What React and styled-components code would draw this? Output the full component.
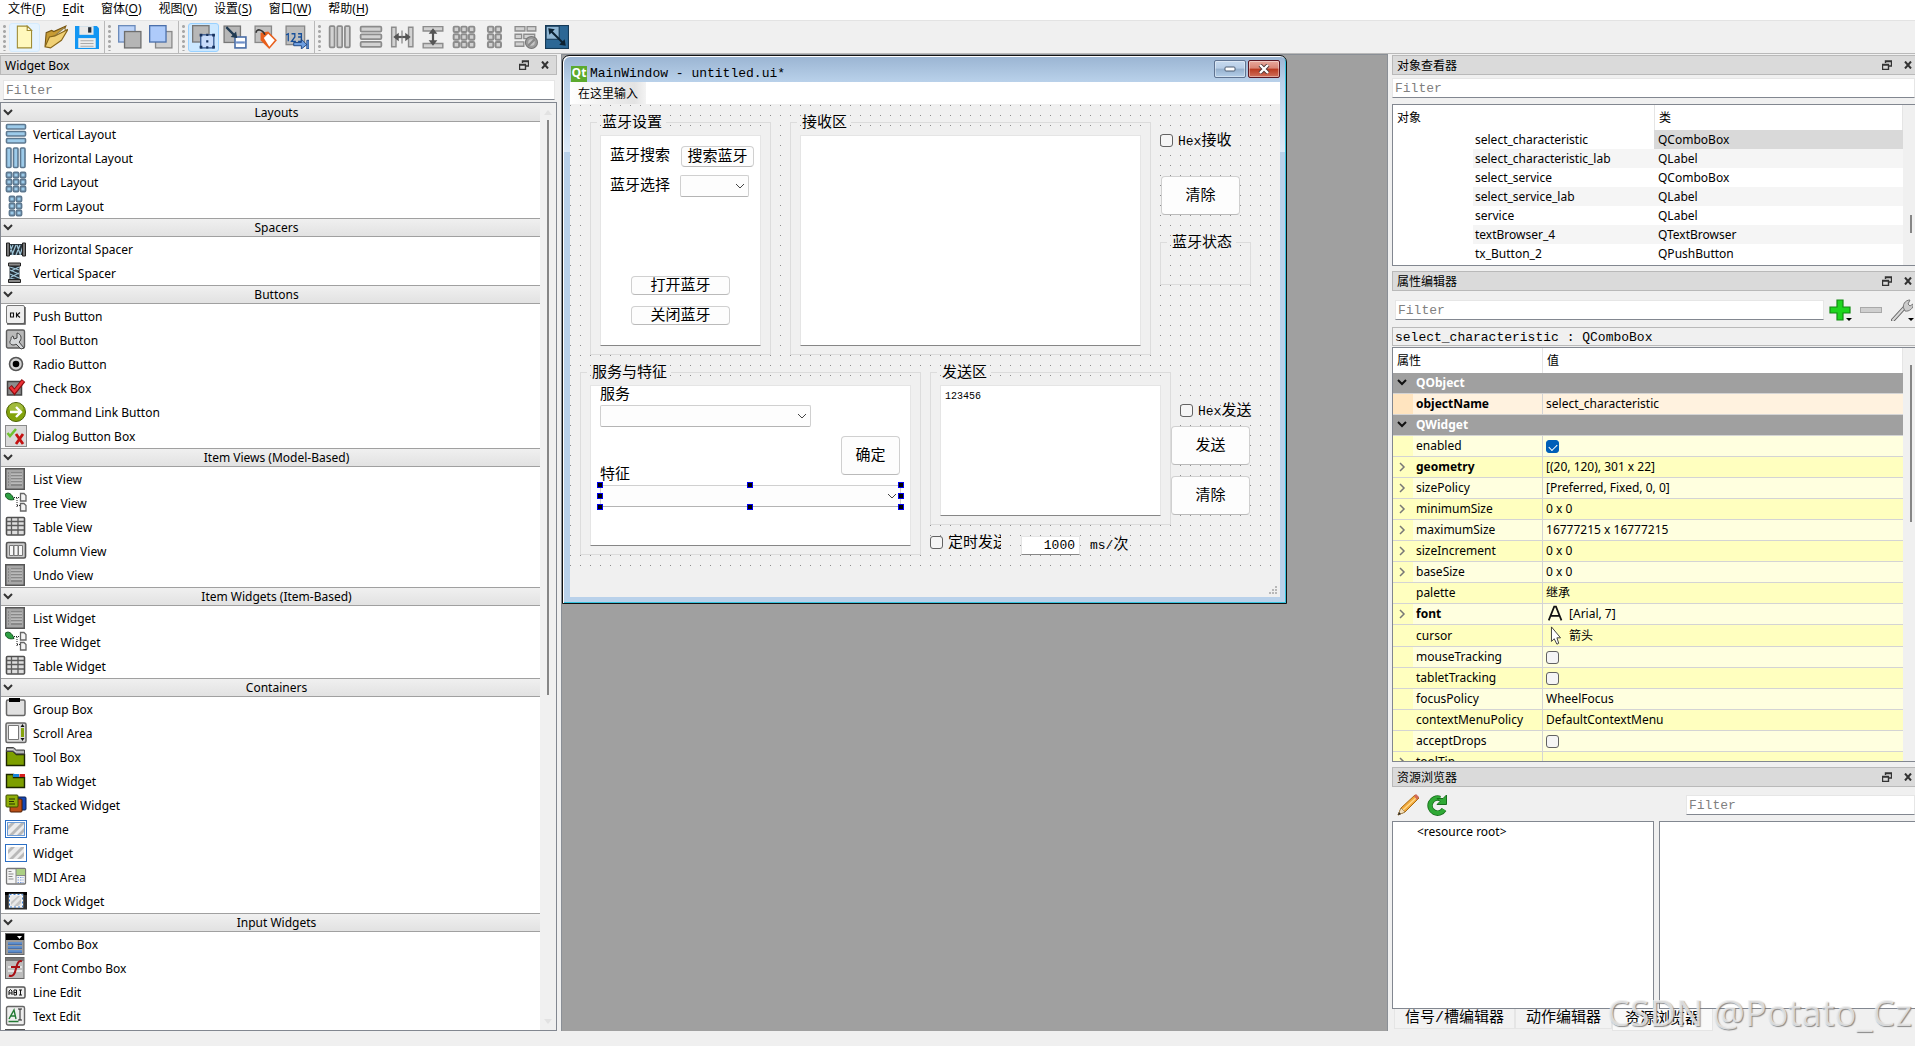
import { useState } from "react"
import styled, { createGlobalStyle, css } from "styled-components"

const theme = {
	ui: `"Noto Sans", "Noto Sans CJK SC", sans-serif`,
	mono: `"Liberation Mono", "Noto Sans CJK SC", monospace`,
	face: "#f0f0f0",
	line: "#828790",
	soft: "#b9b9b9",
}

const menus = [
	["文件", "F"],
	["", "E", "dit"],
	["窗体", "O"],
	["视图", "V"],
	["设置", "S"],
	["窗口", "W"],
	["帮助", "H"],
]

const toolGroups = [
	[
		{ name: "new", hot: true },
		{ name: "open" },
		{ name: "save" },
	],
	[{ name: "lower" }, { name: "raise" }],
	[
		{ name: "editWidgets", active: true },
		{ name: "signals" },
		{ name: "buddies" },
		{ name: "tabOrder" },
	],
	[
		{ name: "hLayoutGrey" },
		{ name: "vLayoutGrey" },
		{ name: "hSplit" },
		{ name: "vSplit" },
		{ name: "gridGrey" },
		{ name: "formGrey" },
		{ name: "breakLayout" },
		{ name: "adjust" },
	],
]

const widgetGroups = [
	{
		title: "Layouts",
		items: [
			["Vertical Layout", "vLayout"],
			["Horizontal Layout", "hLayout"],
			["Grid Layout", "grid"],
			["Form Layout", "form"],
		],
	},
	{
		title: "Spacers",
		items: [
			["Horizontal Spacer", "hSpacer"],
			["Vertical Spacer", "vSpacer"],
		],
	},
	{
		title: "Buttons",
		items: [
			["Push Button", "pushButton"],
			["Tool Button", "toolButton"],
			["Radio Button", "radio"],
			["Check Box", "check"],
			["Command Link Button", "commandLink"],
			["Dialog Button Box", "dialogBox"],
		],
	},
	{
		title: "Item Views (Model-Based)",
		items: [
			["List View", "list"],
			["Tree View", "tree"],
			["Table View", "table"],
			["Column View", "column"],
			["Undo View", "list"],
		],
	},
	{
		title: "Item Widgets (Item-Based)",
		items: [
			["List Widget", "list"],
			["Tree Widget", "tree"],
			["Table Widget", "table"],
		],
	},
	{
		title: "Containers",
		items: [
			["Group Box", "groupBox"],
			["Scroll Area", "scrollArea"],
			["Tool Box", "toolBox"],
			["Tab Widget", "tabWidget"],
			["Stacked Widget", "stacked"],
			["Frame", "frame"],
			["Widget", "widget"],
			["MDI Area", "mdi"],
			["Dock Widget", "dock"],
		],
	},
	{
		title: "Input Widgets",
		items: [
			["Combo Box", "combo"],
			["Font Combo Box", "fontCombo"],
			["Line Edit", "lineEdit"],
			["Text Edit", "textEdit"],
			["", "list"],
		],
	},
]

const objects = [
	["select_characteristic", "QComboBox"],
	["select_characteristic_lab", "QLabel"],
	["select_service", "QComboBox"],
	["select_service_lab", "QLabel"],
	["service", "QLabel"],
	["textBrowser_4", "QTextBrowser"],
	["tx_Button_2", "QPushButton"],
]

const properties = [
	{ group: "QObject" },
	{ name: "objectName", value: "select_characteristic", bold: true, tone: "peach" },
	{ group: "QWidget" },
	{ name: "enabled", check: true, checked: true, tone: "light" },
	{ name: "geometry", value: "[(20, 120), 301 x 22]", bold: true, expand: true, tone: "dark" },
	{ name: "sizePolicy", value: "[Preferred, Fixed, 0, 0]", expand: true, tone: "light" },
	{ name: "minimumSize", value: "0 x 0", expand: true, tone: "dark" },
	{ name: "maximumSize", value: "16777215 x 16777215", expand: true, tone: "light" },
	{ name: "sizeIncrement", value: "0 x 0", expand: true, tone: "dark" },
	{ name: "baseSize", value: "0 x 0", expand: true, tone: "light" },
	{ name: "palette", value: "继承", tone: "dark" },
	{ name: "font", value: "[Arial, 7]", bold: true, expand: true, icon: "letter", tone: "light" },
	{ name: "cursor", value: "箭头", icon: "cursor", tone: "dark", tall: true },
	{ name: "mouseTracking", check: true, tone: "light" },
	{ name: "tabletTracking", check: true, tone: "dark" },
	{ name: "focusPolicy", value: "WheelFocus", tone: "light" },
	{ name: "contextMenuPolicy", value: "DefaultContextMenu", tone: "dark" },
	{ name: "acceptDrops", check: true, tone: "light" },
	{ name: "toolTip", value: "", expand: true, tone: "dark" },
]

const tones = {
	peach: ["#ffe4bf", "#fff2df"],
	light: ["#ffffbf", "#ffffdf"],
	dark: ["#ffffbf", "#ffffbf"],
}

const handles = [
	[0, 0], [150, 0], [301, 0],
	[0, 11], [301, 11],
	[0, 22], [150, 22], [301, 22],
]

/* ---------- icons ---------- */

const blue = { fill: "#9dcbea", stroke: "#5d7890" }
const grey = { fill: "#d2d2d2", stroke: "#8c8c8c" }

const rows = (c) => [2, 9, 16].map((y) => (
	<rect key={y} x="1.5" y={y - 0.5} width="19" height="4.5" rx="1" strokeWidth="1.6" {...c} />
))
const cols = (c) => [2, 9, 16].map((x) => (
	<rect key={x} x={x - 0.5} y="1" width="4.5" height="19.5" rx="1" strokeWidth="1.6" {...c} />
))
const cells = (c, xs) => xs.flatMap((x) => [1.5, 8.5, 15.5].map((y) => (
	<rect key={`${x}-${y}`} x={x} y={y} width="5" height="5" rx="1" strokeWidth="1.8" {...c} />
)))
const stripes = (
	<>
		<rect x="0.5" y="2.5" width="21" height="17" fill="#fff" stroke="#2c6fc4" />
		<path d="M3 5h16v12H3z" fill="#ececec" />
		<path d="M3 12v-4l3-3h4zM4 17 16 5h3v1L8 17zM12 17l7-7v4l-3 3z" fill="#b9b9b9" />
	</>
)
const sheet = (x, y, s, c) => <rect x={x} y={y} width={s} height={s} strokeWidth="1.2" {...c} />

const drawings = {
	vLayout: rows(blue),
	hLayout: cols(blue),
	grid: cells(blue, [1.5, 8.5, 15.5]),
	form: cells(blue, [4.5, 11.5]),
	vLayoutGrey: rows(grey),
	hLayoutGrey: cols(grey),
	gridGrey: cells(grey, [1.5, 8.5, 15.5]),
	formGrey: cells(grey, [4.5, 11.5]),
	hSpacer: (
		<>
			<path d="M4 6h14v11H4z" fill="#27323a" />
			<path d="M4 16 8 7M7 17l4-10M11 17l4-10M15 17l3-9M5 7l3 10M12 7l3 9" stroke="#9fc5d8" strokeWidth="1.2" fill="none" />
			<path d="M1.5 5h3v13h-3zM17.5 5h3v13h-3z" fill="#777" stroke="#222" />
		</>
	),
	vSpacer: (
		<>
			<path d="M4.5 3h10v16h-10z" fill="#27323a" />
			<path d="M5 5l9 3M5 8l9 4M5 12l9 4M5 16l7 2M14 5 6 9M14 11l-8 4" stroke="#9fc5d8" strokeWidth="1.2" fill="none" />
			<path d="M3.5 1h12v3h-12zM3.500 17.500h12v3h-12z" fill="#888" stroke="#222" />
		</>
	),
	pushButton: (
		<>
			<rect x="1.5" y="0.5" width="18" height="18" rx="1.5" fill="#eee" stroke="#777" />
			<path d="M2 19h18V2" fill="none" stroke="#555" strokeWidth="1.5" />
			<path d="M5.500 8h3v4h-3zM11.500 7.500v5M15 7.500l-3 2.500 3 2.500" fill="none" stroke="#111" strokeWidth="1.1" />
		</>
	),
	toolButton: (
		<>
			<rect x="1.5" y="1" width="18" height="18" rx="1.5" fill="#b9b9b9" stroke="#5c5c5c" strokeWidth="1.4" />
			<path d="M5 12c-1 4 4 5 6 3l5 5 3-1-5-6c3-2 3-8-2-9l0 5-3 1-1-3c-3 1-1 3-3 5z" fill="#d4d6d8" stroke="#444" />
		</>
	),
	radio: (
		<>
			<circle cx="11" cy="11" r="6.5" fill="#d5d5d5" stroke="#555" strokeWidth="1.6" />
			<circle cx="11" cy="11" r="3.3" fill="#000" />
		</>
	),
	check: (
		<>
			<rect x="2.5" y="4.500" width="14" height="13.500" fill="#8c8c8c" stroke="#444" strokeWidth="1.5" />
			<path d="M5 9.500 9.500 15 18.500 3.500" fill="none" stroke="#8e0d10" strokeWidth="4.500" />
			<path d="M5.500 10 9.500 14.500 18 4" fill="none" stroke="#ec3237" strokeWidth="2.500" />
		</>
	),
	commandLink: (
		<>
			<circle cx="11" cy="11" r="9.500" fill="#83a30c" stroke="#4d6206" />
			<ellipse cx="11" cy="7" rx="7" ry="5" fill="#b5cb5f" opacity=".6" />
			<path d="M5 11h10M11 6l5 5-5 5" fill="none" stroke="#fff" strokeWidth="2.4" />
		</>
	),
	dialogBox: (
		<>
			<rect x="0.5" y="0.5" width="21" height="21" fill="#dadada" stroke="#8b8b8b" />
			<path d="M2.500 8 5 11l6-7" fill="none" stroke="#6fc22e" strokeWidth="2.500" />
			<path d="M11 9l7 10M18 9l-7 10" stroke="#c41212" strokeWidth="2.800" />
		</>
	),
	list: (
		<>
			<rect x="0.75" y="0.75" width="18.500" height="20.500" fill="#a6a6a6" stroke="#565656" strokeWidth="1.500" />
			<path d="M6 5h11M6 8h11M6 11h11M6 14h11M6 17h11M3 5h1M3 8h1M3 11h1M3 14h1M3 17h1" stroke="#6b6b6b" />
			<path d="M6 6h11M6 9h11M6 12h11M6 15h11" stroke="#cdcdcd" />
		</>
	),
	tree: (
		<>
			<path d="M0 2.500c3-3 7-1 9 5-4 1-8 0-9-5z" fill="#2ea043" stroke="#12501e" />
			<path d="M9 5.500h6M12 6v10M12 13.500h3" fill="none" stroke="#222" strokeDasharray="1 1" />
			<path d="M15.500 1.500h3.500l2 2v5.500h-5.500zM15.500 11.500h3.500l2 2v5.500h-5.500z" fill="#f4f4f4" stroke="#666" strokeWidth="1.300" />
		</>
	),
	table: (
		<>
			<rect x="1.5" y="1.5" width="18" height="17.500" rx="1" fill="#dedede" stroke="#505050" strokeWidth="1.600" />
			<path d="M2 5.500h17M2 9.500h17M2 14h17M6.500 2v17M13 2v17" stroke="#5c5c5c" strokeWidth="1.300" />
		</>
	),
	column: (
		<>
			<rect x="1.5" y="2.500" width="19" height="15.500" rx="1.5" fill="#ccc" stroke="#555" strokeWidth="1.600" />
			<path d="M4.500 5.500h4v10h-4zM9 5.500h4v10H9zM13.500 5.500h4v10h-4z" fill="#f8f8f8" stroke="#777" />
		</>
	),
	groupBox: (
		<>
			<rect x="1.5" y="2" width="18.500" height="15.500" rx="1.5" fill="#e0e0e0" stroke="#666" strokeWidth="1.500" />
			<path d="M4 0h11v4H4z" fill="#000" />
		</>
	),
	scrollArea: (
		<>
			<rect x="1" y="1" width="20" height="19.500" rx="1.5" fill="#ddd" stroke="#666" strokeWidth="1.500" />
			<path d="M3.500 3.500h10v14h-10z" fill="#fff" stroke="#777" />
			<path d="M16 6h3v9h-3z" fill="#86a40c" />
			<path d="M15.500 5h4l-2-3zM15.500 16h4l-2 3z" fill="#111" />
		</>
	),
	toolBox: (
		<>
			<path d="M1.500 4.500h6l4 4h8v11h-18z" fill="#7d9f00" stroke="#1c2600" strokeWidth="1.400" />
			<path d="M1.500 1.500h7l3 2.500h8v4h-8L8 5.500H1.500z" fill="#909294" stroke="#444" />
			<path d="M2 3.500h6l3 2.500h8" fill="none" stroke="#ddd" />
		</>
	),
	tabWidget: (
		<>
			<path d="M1.500 4.500h7v3h11v10h-18z" fill="#7d9f00" stroke="#1c2600" strokeWidth="1.400" />
			<path d="M8 4h6v3H8z" fill="#1584d8" />
			<path d="M14.500 4H20v3h-5.500z" fill="#d61f1f" />
		</>
	),
	stacked: (
		<>
			<rect x="9" y="3" width="12" height="13" rx="1" fill="#1547b5" stroke="#0b1f50" />
			<rect x="5" y="5" width="12" height="13" rx="1" fill="#bb4f16" stroke="#4c1c03" />
			<rect x="1" y="1" width="12" height="12" rx="1" fill="#8fae08" stroke="#3d4c00" />
			<path d="M4 5h6M4 7.500h5M4 10h6" stroke="#263000" />
		</>
	),
	frame: (
		<>
			{stripes}
			<rect x="2.5" y="4.500" width="17" height="13" fill="none" stroke="#6f9dd5" />
		</>
	),
	widget: stripes,
	mdi: (
		<>
			<rect x="1.5" y="2.500" width="19" height="15.500" rx="1" fill="#f4f4f4" stroke="#777" strokeWidth="1.300" />
			<path d="M11 3h9v6h-9z" fill="#abcf83" />
			<path d="M11 3v15M11 9.500h9M3.500 5.500h3M3.500 8h5M3.500 10.500h4M3.500 13h5" stroke="#888" />
			<path d="M12.500 11.500h6M12.500 14h6M12.500 16.500h6" stroke="#7d9fe0" strokeDasharray="1.5 1" />
		</>
	),
	dock: (
		<>
			<rect y="2" width="22" height="17.500" fill="#2e2e2e" />
			<path d="M0 2h22v3H0z" fill="#000" />
			<rect x="4.500" y="4.500" width="13" height="12.500" fill="#e8e8e8" stroke="#fff" strokeWidth="1.400" />
			<rect x="4.500" y="4.500" width="13" height="12.500" fill="none" stroke="#3d7fd0" strokeDasharray="2 2" />
			<path d="M6 12 13 6h2L6 15zM9 16l7-7v4l-3 3z" fill="#c4c4c4" />
		</>
	),
	combo: (
		<>
			<rect x="0.5" y="0.5" width="18.500" height="21" fill="#9b9b9b" stroke="#666" />
			<path d="M1 1h18v6H1z" fill="#000" />
			<path d="M12 3h5l-2.500 3z" fill="#fff" />
			<path d="M3 10.500h14M3 14.500h14M3 18.500h14" stroke="#2f62aa" strokeWidth="2.500" />
			<path d="M3 10h14M3 14h14M3 18h14" stroke="#83b4ec" />
		</>
	),
	fontCombo: (
		<>
			<rect x="0.5" y="0.5" width="18.500" height="21" fill="#bdbdbd" stroke="#666" />
			<path d="M1 1h18v3H1z" fill="#777" />
			<path d="M3 10h14M3 14h14" stroke="#e4e4e4" strokeWidth="2" />
			<path d="M17 4.500c-3-2-5 2-6 7s-3 9-7 7M6 10h9" fill="none" stroke="#a80f14" strokeWidth="2" />
		</>
	),
	lineEdit: (
		<>
			<rect x="1.5" y="6" width="18.500" height="11" rx="1.5" fill="#eee" stroke="#555" strokeWidth="1.500" />
			<path d="M4 14v-4l1.500-1.500L7 10v4M4 12h3M9 9v5h2.500V9zM9 11.500h2.500M14 9h3M15.500 9v5M14 14h3" fill="none" stroke="#111" />
		</>
	),
	textEdit: (
		<>
			<rect x="1.5" y="1.5" width="18" height="18.500" rx="1.5" fill="#eee" stroke="#666" strokeWidth="1.400" />
			<path d="M4 14 9 5l2 9M6 11h4M3.500 16.500h10" fill="none" stroke="#247a34" strokeWidth="1.400" />
			<path d="M13 4h4M15 4v11M13 15h4" fill="none" stroke="#222" />
		</>
	),
	new: (
		<>
			<path d="M4 1h9l4 4v16H4z" fill="#fff8bd" stroke="#a08c35" />
			<path d="M13 1v4h4z" fill="#fffef0" stroke="#a08c35" />
		</>
	),
	open: (
		<>
			<path d="M1 19 2 7l5-2 2 1 11-5-6 13z" fill="#c79b33" stroke="#775513" />
			<path d="M5 14 18 3l2 1-5 8z" fill="#f3efe4" stroke="#97844f" />
			<path d="m1 20 4-9 5-1 12-6-6 10-10 7z" fill="#f0d074" stroke="#876519" />
		</>
	),
	save: (
		<>
			<path d="M0 1h20l2 2v19H0z" fill="#1296f3" />
			<path d="M4 1h13v8H4z" fill="#e9e9e9" />
			<path d="M12 2h3v5h-3z" fill="#26313c" />
			<path d="M3 12h16v9H3z" fill="#ededed" />
			<path d="M5 14.500h12M5 17h12M5 19.500h12" stroke="#aaa" />
		</>
	),
	lower: (
		<>
			{sheet(0.6, 0.6, 15, { fill: "#bcd3f8", stroke: "#6b8bbb" })}
			{sheet(6, 6, 15, { fill: "#b5b5b5", stroke: "#6e6e6e" })}
		</>
	),
	raise: (
		<>
			{sheet(6, 6, 15, { fill: "#cfcfcf", stroke: "#888" })}
			{sheet(0.6, 0.6, 15, { fill: "#aecbfa", stroke: "#4c70ab" })}
		</>
	),
	editWidgets: (
		<>
			{sheet(0.6, 0.6, 15, { fill: "#b7b7b7", stroke: "#777" })}
			{sheet(8, 9, 12, { fill: "#c9dcfb", stroke: "#36578f" })}
			<path d="M7 8h2.500v2.500H7zM18.500 8H21v2.500h-2.500zM7 19h2.500v2.500H7zM18.500 19H21v2.500h-2.500zM13 14h2v2h-2zM13 8h2v2h-2zM13 19.500h2v2h-2z" fill="#16305c" />
		</>
	),
	signals: (
		<>
			{sheet(1, 1, 15, { fill: "#b7b7b7", stroke: "#777" })}
			<rect x="11" y="11" width="10" height="10" fill="#fff" stroke="#4c6fa8" strokeWidth="1.500" />
			<path d="M12 15h8v2h-8z" fill="#6d8fc9" />
			<path d="m3 2 9 9" stroke="#203a52" strokeWidth="2.200" />
			<path d="m13 12-6-1 5-5z" fill="#203a52" />
		</>
	),
	buddies: (
		<>
			{sheet(1, 1, 15, { fill: "#c2c2c2", stroke: "#888" })}
			<path d="m6 7 7-1 8 8-7 8-8-8z" fill="#e85f1c" />
			<path d="m9 12 4-4 6 6-5 6z" fill="#fff" />
			<path d="M2 7c0-4 6-3 8 2" stroke="#333" strokeWidth="1.500" fill="none" />
		</>
	),
	tabOrder: (
		<>
			{sheet(1, 1, 17, { fill: "#bebebe", stroke: "#888" })}
			<path d="m1 9 2-1v7M6 8h3v3l-3 4h4M12 8h3v7h-3M12 11h3" fill="none" stroke="#174f9a" strokeWidth="1.200" />
			<path d="M8 16h7v-3l5 5-5 4v-3H8zM20 14h2v8h-2z" fill="#6d9ee0" stroke="#163f7c" strokeWidth=".8" />
		</>
	),
	hSplit: (
		<>
			<path d="M1.500 2h4v18h-4zM17 2h4v18h-4z" {...grey} strokeWidth="1.300" />
			<path d="M6 11h10" stroke="#555" strokeWidth="2" />
			<path d="m3 11 5-4v8zM19 11l-5-4v8z" fill="#555" />
			<path d="M11 5v12" stroke="#777" />
		</>
	),
	vSplit: (
		<>
			<path d="M2 1.500h18v4H2zM2 17h18v4H2z" {...grey} strokeWidth="1.300" />
			<path d="M11 6v10" stroke="#555" strokeWidth="2" />
			<path d="m11 3 4 5H7zM11 19l-4-5h8z" fill="#555" />
		</>
	),
	breakLayout: (
		<>
			<path d="M1 1.500h9v4H1zM12 1.500h8v4h-8zM1 8.500h6v4H1zM9 8.500h10v4H9zM1 15.500h8v4H1z" {...grey} strokeWidth="1.200" />
			<circle cx="16" cy="16" r="5.500" fill="#9b9b9b" stroke="#777" />
			<circle cx="16" cy="16" r="3" fill="#c6c6c6" />
			<path d="m13 19 6-6" stroke="#888" strokeWidth="2" />
		</>
	),
	adjust: (
		<>
			<rect x="0.5" y="0.5" width="21" height="21" fill="#2c6795" stroke="#153a58" />
			<path d="M1 1h12v12H1z" fill="#8fb6d3" stroke="#183a56" />
			<path d="m5 5 12 12" stroke="#0c2233" strokeWidth="1.800" />
			<path d="m3 3 6 1-5 5zM19 19l-6-1 5-5z" fill="#0c2233" />
		</>
	),
	plus: (
		<path d="M8 1h6v7h7v6h-7v7H8v-7H1V8h7z" fill="#1fd51f" stroke="#138a13" strokeWidth="1.200" />
	),
	minus: <rect x="0.5" y="8.500" width="21" height="5" fill="#cfcfcf" stroke="#a9a9a9" />,
	wrench: (
		<>
			<path d="M2 21 14 8" stroke="#666" strokeWidth="4" strokeLinecap="round" />
			<path d="M2 21 14 8" stroke="#d8d8d8" strokeWidth="2" strokeLinecap="round" />
			<path d="M13 10c-2-4 1-9 6-9l-2 4 2 2 3-2c1 4-4 8-8 7z" fill="#ccc" stroke="#777" />
		</>
	),
	pencil: (
		<>
			<path d="m1 21 3-7L18 1l4 3L8 18z" fill="#f2a93b" stroke="#a96a12" />
			<path d="M6 16 20 3" stroke="#ffd98b" strokeWidth="1.500" />
			<path d="m17 2 2-2 3 3-2 3z" fill="#d06a58" />
			<path d="m1 21 3-7 4 4z" fill="#f3dfbd" stroke="#8d7444" strokeWidth=".6" />
			<path d="m1 21 1-3 2 2z" fill="#222" />
		</>
	),
	reload: (
		<>
			<path d="M18 15.500A7.500 7.500 0 1 1 14 4.500" fill="none" stroke="#186f1c" strokeWidth="5.500" />
			<path d="M18 15.500A7.500 7.500 0 1 1 14 4.500" fill="none" stroke="#2fa935" strokeWidth="4" />
			<path d="M20.500 1v9.500H11l3-3-3-3 6 0z" fill="#2fa935" stroke="#186f1c" />
		</>
	),
	letter: <path d="M3 18 9 3h2l6 15M5.500 13h9" fill="none" stroke="#111" strokeWidth="1.900" />,
	cursor: <path d="M6 1v16l3-3 3 6 2-1-2-6h4z" fill="#fff" stroke="#333" />,
}

function Icon({ name, size = 22 }) {
	return (
		<svg width={size} height={size} viewBox="0 0 22 22" aria-hidden="true">
			{drawings[name]}
		</svg>
	)
}

function Chevron({ color = "#333", turn = "down", weight = 2 }) {
	const d = turn === "down" ? "M1 2l4 4 4-4" : "M3 1l4 4-4 4"
	return (
		<svg width="10" height="10" viewBox="0 0 10 10" aria-hidden="true">
			<path d={d} fill="none" stroke={color} strokeWidth={weight} />
		</svg>
	)
}

/* ---------- shared parts ---------- */

function DockTitle({ children, clipped }) {
	return (
		<StyledDockTitle $clipped={clipped}>
			<h2>{children}</h2>
			<button aria-label="Float">
				<svg width="10" height="10" viewBox="0 0 10 10">
					<path d="M3.500 3V1h6v5H7M3 1.500h7M.5 4.500h6v5h-6zM0 5h7" fill="none" stroke="#333" strokeWidth="1.400" />
				</svg>
			</button>
			<button aria-label="Close">
				<svg width="8" height="8" viewBox="0 0 8 8">
					<path d="M1 0.500l6 7M7 0.500l-6 7" stroke="#333" strokeWidth="2" />
				</svg>
			</button>
		</StyledDockTitle>
	)
}

function Combo({ label }) {
	return (
		<StyledCombo>
			<select aria-label={label}>
				<option></option>
			</select>
			<Chevron weight={1} color="#444" />
		</StyledCombo>
	)
}

function Check({ children, checked = false, label }) {
	const [on, setOn] = useState(checked)

	return (
		<StyledCheck>
			<input
				type="checkbox"
				checked={on}
				aria-label={label}
				onChange={() => setOn(!on)}
			/>
			{children && <span>{children}</span>}
		</StyledCheck>
	)
}

/* ---------- panels ---------- */

function WidgetBox() {
	return (
		<Dock>
			<DockTitle>Widget Box</DockTitle>
			<WidgetFilter placeholder="Filter" aria-label="Filter widgets" />
			<Sunken>
				<WidgetList>
					{widgetGroups.map((group) => (
						<section key={group.title}>
							<WidgetHeader>
								<Chevron />
								<span>{group.title}</span>
							</WidgetHeader>
							{group.items.map(([label, icon]) => (
								<WidgetRow key={label}>
									<Icon name={icon} />
									<span>{label}</span>
								</WidgetRow>
							))}
						</section>
					))}
				</WidgetList>
				<ScrollTrack>
					<ScrollArrow />
					<ScrollHandle $size="62%" />
					<ScrollArrow $down />
				</ScrollTrack>
			</Sunken>
		</Dock>
	)
}

function FormWindow() {
	return (
		<StyledWindow>
			<WindowTitle>
				<QtLogo>Qt</QtLogo>
				<span>MainWindow - untitled.ui*</span>
				<WindowButton aria-label="Minimize">
					<svg width="12" height="6" viewBox="0 0 12 6">
						<rect x="1" y="1" width="10" height="4" rx="1" fill="#fff" stroke="#4d5c72" />
					</svg>
				</WindowButton>
				<WindowButton $close aria-label="Close window">
					<svg width="12" height="10" viewBox="0 0 12 10">
						<path d="M2 1l8 8M10 1 2 9" stroke="#4c3434" strokeWidth="4" />
						<path d="M2 1l8 8M10 1 2 9" stroke="#fff" strokeWidth="2.400" />
					</svg>
				</WindowButton>
			</WindowTitle>
			<WindowBody>
				<FormMenu>
					<span>在这里输入</span>
				</FormMenu>
				<Canvas>
					<Place $x={20} $y={8} $w={181} $h={243}>
						<Group>
							<legend>蓝牙设置</legend>
							<Browser>
								<Place $x={9} $y={11}>蓝牙搜索</Place>
								<Place $x={80} $y={10} $w={73} $h={21}>
									<PushButton>搜索蓝牙</PushButton>
								</Place>
								<Place $x={9} $y={41}>蓝牙选择</Place>
								<Place $x={79} $y={39} $w={69} $h={22}>
									<Combo label="蓝牙选择" />
								</Place>
								<Place $x={30} $y={140} $w={99} $h={19}>
									<PushButton>打开蓝牙</PushButton>
								</Place>
								<Place $x={30} $y={170} $w={99} $h={19}>
									<PushButton>关闭蓝牙</PushButton>
								</Place>
							</Browser>
						</Group>
					</Place>
					<Place $x={220} $y={8} $w={361} $h={243}>
						<Group>
							<legend>接收区</legend>
							<Browser />
						</Group>
					</Place>
					<Place $x={590} $y={24}>
						<Check><small>Hex</small>接收</Check>
					</Place>
					<Place $x={591} $y={72} $w={79} $h={39}>
						<PushButton>清除</PushButton>
					</Place>
					<Place $x={590} $y={128} $w={91} $h={53}>
						<Group>
							<legend>蓝牙状态</legend>
						</Group>
					</Place>

					<Place $x={10} $y={258} $w={341} $h={193}>
						<Group>
							<legend>服务与特征</legend>
							<Browser>
								<Place $x={9} $y={0}>服务</Place>
								<Place $x={9} $y={19} $w={211} $h={22}>
									<Combo label="服务" />
								</Place>
								<Place $x={250} $y={50} $w={59} $h={39}>
									<PushButton>确定</PushButton>
								</Place>
								<Place $x={9} $y={80}>特征</Place>
								<Place $x={9} $y={99} $w={301} $h={22}>
									<Combo label="特征" />
									{handles.map(([x, y]) => (
										<Handle key={`${x}-${y}`} $x={x} $y={y} />
									))}
								</Place>
							</Browser>
						</Group>
					</Place>
					<Place $x={360} $y={258} $w={241} $h={163}>
						<Group>
							<legend>发送区</legend>
							<SendText aria-label="发送区" defaultValue="123456" />
						</Group>
					</Place>
					<Place $x={610} $y={294}>
						<Check><small>Hex</small>发送</Check>
					</Place>
					<Place $x={601} $y={322} $w={79} $h={39}>
						<PushButton>发送</PushButton>
					</Place>
					<Place $x={601} $y={372} $w={79} $h={39}>
						<PushButton>清除</PushButton>
					</Place>
					<Place $x={360} $y={426} $w={71} $h={24} $clip>
						<Check>定时发送</Check>
					</Place>
					<Place $x={451} $y={432} $w={59} $h={19}>
						<NumberInput defaultValue="1000" aria-label="ms/次" />
					</Place>
					<Place $x={520} $y={432}>
						<small>ms/</small>次
					</Place>
				</Canvas>
				<FormStatus>
					<svg width="9" height="9" viewBox="0 0 9 9">
						<path d="M6 0h2v2H6zM3 3h2v2H3zM6 3h2v2H6zM0 6h2v2H0zM3 6h2v2H3zM6 6h2v2H6z" fill="#b8b8b8" />
					</svg>
				</FormStatus>
			</WindowBody>
		</StyledWindow>
	)
}

function ObjectInspector() {
	return (
		<Dock>
			<DockTitle clipped>对象查看器</DockTitle>
			<ObjectFilter placeholder="Filter" aria-label="Filter objects" />
			<Sunken $open>
				<ObjectTable>
					<colgroup>
						<col />
						<col className="class" />
					</colgroup>
					<thead>
						<tr>
							<th>对象</th>
							<th>类</th>
						</tr>
					</thead>
					<tbody>
						{objects.map(([name, type], index) => (
							<ObjectRow key={name} $odd={index % 2 === 1} $selected={index === 0}>
								<td><span>{name}</span></td>
								<td>{type}</td>
							</ObjectRow>
						))}
					</tbody>
				</ObjectTable>
				<ScrollTrack $slim>
					<ScrollHandle $size="18px" $offset="110px" />
				</ScrollTrack>
			</Sunken>
		</Dock>
	)
}

function PropertyEditor() {
	return (
		<Dock>
			<DockTitle clipped>属性编辑器</DockTitle>
			<PropertyTools>
				<FilterInput placeholder="Filter" aria-label="Filter properties" />
				<IconButton aria-label="Add" $menu><Icon name="plus" /></IconButton>
				<IconButton aria-label="Remove"><Icon name="minus" /></IconButton>
				<IconButton aria-label="Configure" $menu><Icon name="wrench" /></IconButton>
			</PropertyTools>
			<SelectedName>select_characteristic : QComboBox</SelectedName>
			<Sunken $open>
				<PropertyTable>
					<colgroup>
						<col className="branch" />
						<col className="name" />
						<col />
					</colgroup>
					<thead>
						<tr>
							<th colSpan={2}>属性</th>
							<th>值</th>
						</tr>
					</thead>
					<tbody>
						{properties.map((row) => row.group ? (
							<PropertyGroup key={row.group}>
								<td><Chevron color="#111" /></td>
								<td colSpan={2}>{row.group}</td>
							</PropertyGroup>
						) : (
							<PropertyRow key={row.name} $tone={row.tone} $bold={row.bold} $tall={row.tall}>
								<td>{row.expand && <Chevron turn="right" color="#777" weight={1.5} />}</td>
								<td>{row.name}</td>
								<td>
									<div>
										{row.icon && <Icon name={row.icon} size={20} />}
										{row.check ? <Check checked={row.checked} label={row.name} /> : row.value}
									</div>
								</td>
							</PropertyRow>
						))}
					</tbody>
				</PropertyTable>
				<ScrollTrack $slim>
					<ScrollHandle $size="38%" $offset="17px" />
				</ScrollTrack>
			</Sunken>
		</Dock>
	)
}

function ResourceBrowser() {
	return (
		<Dock>
			<DockTitle clipped>资源浏览器</DockTitle>
			<ResourceTools>
				<IconButton aria-label="Edit resources"><Icon name="pencil" /></IconButton>
				<IconButton aria-label="Reload"><Icon name="reload" /></IconButton>
				<FilterInput placeholder="Filter" aria-label="Filter resources" />
			</ResourceTools>
			<ResourcePanes>
				<Pane>&lt;resource root&gt;</Pane>
				<Pane $open />
			</ResourcePanes>
			<Tabs>
				<Tab>信号/槽编辑器</Tab>
				<Tab>动作编辑器</Tab>
				<Tab $active>资源浏览器</Tab>
			</Tabs>
		</Dock>
	)
}

function App() {
	return (
		<>
			<GlobalStyle />
			<Page>
				<MenuBar>
					{menus.map(([text, key, rest]) => (
						<button key={key}>
							{rest ? <><u>{key}</u>{rest}</> : <>{text}(<u>{key}</u>)</>}
						</button>
					))}
				</MenuBar>
				<ToolBar>
					{toolGroups.map((group) => (
						<ToolGroup key={group[0].name}>
							<Grip />
							{group.map((tool) => (
								<ToolButton key={tool.name} aria-label={tool.name} $hot={tool.hot} $active={tool.active}>
									<Icon name={tool.name} size={24} />
								</ToolButton>
							))}
						</ToolGroup>
					))}
				</ToolBar>
				<Main>
					<WidgetBox />
					<MdiArea>
						<FormWindow />
					</MdiArea>
					<SideDocks>
						<ObjectInspector />
						<PropertyEditor />
						<ResourceBrowser />
					</SideDocks>
				</Main>
				<Watermark>CSDN @Potato_Cz</Watermark>
			</Page>
		</>
	)
}

/* ---------- styles ---------- */

const GlobalStyle = createGlobalStyle`
	* {
		box-sizing: border-box;
	}

	body {
		margin: 0;
		background: ${theme.face};
		color: #000;
		font-family: ${theme.ui};
		font-size: 12px;
		line-height: 16px;
	}

	button, input, select, textarea {
		margin: 0;
		padding: 0;
		border: 0 none;
		border-radius: 0;
		background: none;
		color: inherit;
		font: inherit;
	}

	svg {
		display: block;
		flex: none;
	}
`

const Page = styled.div`
	position: relative;
	display: flex;
	flex-direction: column;
	height: 100vh;
	padding-bottom: 15px;
	overflow: hidden;
`

const MenuBar = styled.nav`
	display: flex;
	gap: 17px;
	height: 20px;
	padding: 0 8px;
	background: #fff;

	button {
		height: 18px;
	}

	u {
		text-underline-offset: 2px;
	}
`

const ToolBar = styled.div`
	display: flex;
	height: 34px;
	border-top: 1px solid #e3e3e3;
	border-bottom: 1px solid ${theme.soft};
`

const ToolGroup = styled.div`
	display: flex;
	align-items: center;
	padding-right: 2px;
	border-right: 1px solid ${theme.soft};

	&:last-child {
		border-right: 0 none;
	}
`

const Grip = styled.span`
	width: 3px;
	height: 27px;
	margin: 0 3px;
	background: radial-gradient(circle, #a8a8a8 1px, transparent 2px) 0 0 / 3px 5px;
`

const ToolButton = styled.button`
	display: flex;
	align-items: center;
	justify-content: center;
	width: 31px;
	height: 29px;
	border: 1px solid transparent;
	border-radius: 3px;

	${({ $hot }) => $hot && css`
		background: #e5f3ff;
		border-color: #d5ebfd;
	`}

	${({ $active }) => $active && css`
		background: #cce8ff;
		border-color: #99d1ff;
	`}
`

const Main = styled.main`
	display: grid;
	grid-template-columns: 557px minmax(0, 1fr) 523px;
	gap: 4px;
	flex: 1;
	min-height: 0;
`

const Dock = styled.section`
	display: flex;
	flex-direction: column;
	min-height: 0;
	padding-top: 1px;
`

const SideDocks = styled.div`
	display: grid;
	grid-template-rows: minmax(0, 212fr) minmax(0, 492fr) minmax(0, 265fr);
	gap: 4px;
	min-height: 0;
`

const StyledDockTitle = styled.header`
	display: flex;
	flex: none;
	align-items: center;
	gap: 12px;
	height: 20px;
	padding: 0 ${({ $clipped }) => ($clipped ? "3px" : "7px")} 0 4px;
	border: 1px solid ${theme.soft};
	${({ $clipped }) => $clipped && "border-right: 0 none;"}
	background: #dadada;

	h2 {
		flex: 1;
		margin: 0;
		padding-top: 1px;
		font-size: 12px;
		font-weight: 400;
	}
`

const FilterInput = styled.input`
	flex: none;
	height: 20px;
	padding: 0 2px;
	border: 1px solid #e6e6e6;
	border-bottom-color: ${theme.line};
	background: #fff;
	font-family: ${theme.mono};
	font-size: 13px;

	&::placeholder {
		color: #808080;
	}
`

const WidgetFilter = styled(FilterInput)`
	margin: 5px 2px 2px 3px;
`

const ObjectFilter = styled(FilterInput)`
	margin: 3px 0 6px;
`

const Sunken = styled.div`
	display: flex;
	flex: 1;
	min-height: 0;
	border: 1px solid ${theme.line};
	${({ $open }) => $open && "border-right: 0 none;"}
	background: #fff;
	overflow: hidden;
`

const WidgetList = styled.div`
	flex: 1;
	overflow: hidden;
`

const WidgetHeader = styled.h3`
	display: flex;
	align-items: center;
	height: 19px;
	margin: 0;
	padding-left: 2px;
	border-top: 1px solid #a0a0a0;
	border-bottom: 1px solid #a0a0a0;
	background: linear-gradient(#f0f0f0, #e2e2e2);
	font-size: 12px;
	font-weight: 400;

	span {
		flex: 1;
		text-align: center;
	}

	section:first-child > & {
		border-top-color: #f0f0f0;
	}
`

const WidgetRow = styled.div`
	display: flex;
	align-items: center;
	gap: 6px;
	height: 24px;
	padding-left: 4px;

	span {
		padding-top: 1px;
	}
`

const ScrollTrack = styled.div`
	display: flex;
	flex: none;
	flex-direction: column;
	align-items: center;
	width: ${({ $slim }) => ($slim ? "12px" : "16px")};
	padding-left: ${({ $slim }) => ($slim ? "3px" : "0")};
	background: ${theme.face};
`

const ScrollHandle = styled.span`
	flex: none;
	width: 2px;
	height: ${({ $size }) => $size};
	margin-top: ${({ $offset = "0" }) => $offset};
	background: #868686;
`

const ScrollArrow = styled.span`
	margin: ${({ $down }) => ($down ? "auto 0 6px" : "7px 0 5px")};
	border: 4px solid transparent;
	${({ $down }) => $down
		? "border-top: 5px solid #e2e2e2; border-bottom: 0 none;"
		: "border-bottom: 5px solid #e2e2e2; border-top: 0 none;"}
`

const MdiArea = styled.div`
	border: 1px solid #8a8f96;
	border-bottom: 0 none;
	background: #a0a0a0;
	overflow: hidden;
`

const StyledWindow = styled.section`
	width: 725px;
	border: 1px solid #111;
	border-radius: 7px 7px 0 0;
	padding: 0 6px 6px 7px;
	background:
		linear-gradient(#b9d1ea, #dce9f7) 0 26px / 100% 70px no-repeat,
		linear-gradient(#9ab4d2, #b9d1ea) 0 0 / 100% 26px no-repeat,
		#b9d1ea;
	box-shadow: inset 1px 1px 0 #fff, inset -1px -1px 0 #35c2dd;
`

const WindowTitle = styled.header`
	display: flex;
	align-items: center;
	gap: 2px;
	height: 26px;
	padding-left: 1px;
	font-family: ${theme.mono};
	font-size: 13px;

	& > span {
		margin-top: 9px;
	}

	& > span:nth-child(2) {
		flex: 1;
	}
`

const QtLogo = styled.span`
	width: 16px;
	height: 16px;
	margin-right: 1px;
	background: #5caa2e;
	color: #fff;
	font: 700 12px/14px "Open Sans", sans-serif;
	text-align: center;
`

const WindowButton = styled.button`
	display: flex;
	align-items: center;
	justify-content: center;
	width: 32px;
	height: 18px;
	border: 1px solid ${({ $close }) => ($close ? "#5a1622" : "#5f7391")};
	border-radius: 2px;
	background: ${({ $close }) => $close
		? "linear-gradient(#e8a99d, #d98575 45%, #b9391f 50%, #d0705c)"
		: "linear-gradient(#c6d9ee, #b7cde6 45%, #95b0cd 50%, #b5cfe9)"};
	box-shadow: inset 0 0 0 1px rgba(255, 255, 255, 0.4);
`

const WindowBody = styled.div`
	background: ${theme.face};
	font-family: ${theme.mono};
	font-size: 15px;
	line-height: 20px;

	small {
		font-size: 13px;
	}
`

const FormMenu = styled.div`
	height: 22px;
	background: #fff;
	font: 12px/24px ${theme.ui};
	overflow: hidden;

	span {
		display: inline-block;
		padding: 0 8px;
		background: linear-gradient(90deg, #fff, #e3e3e3 85%, #f3f3f3);
	}
`

/* the designer grid: one dot every ten pixels */
const Canvas = styled.div`
	position: relative;
	height: 466px;
	background: radial-gradient(circle at 0 0, #8f8f8f 1px, transparent 1px) 0 1px / 10px 10px;
`

const Place = styled.div`
	position: absolute;
	left: ${({ $x }) => $x}px;
	top: ${({ $y }) => $y}px;
	${({ $w }) => $w && `width: ${$w}px;`}
	${({ $h }) => $h && `height: ${$h}px;`}
	${({ $clip }) => $clip && "overflow: hidden;"}
	white-space: nowrap;
`

const Group = styled.fieldset`
	display: flex;
	width: 100%;
	height: 100%;
	min-width: 0;
	margin: 0;
	padding: 3px 9px 8px;
	border: 1px solid #dcdcdc;

	legend {
		height: 20px;
		margin-left: -3px;
		padding: 0 4px 0 5px;
		line-height: 24px;
	}
`

const field = css`
	border: 1px solid #e5e5e5;
	border-bottom-color: #868686;
	background: #fff;
`

const Browser = styled.div`
	position: relative;
	flex: 1;
	${field}
`

const SendText = styled.textarea`
	flex: 1;
	min-width: 0;
	padding: 3px 4px;
	resize: none;
	font-size: 10px;
	line-height: 16px;
	${field}
`

const NumberInput = styled.input`
	display: block;
	width: 100%;
	height: 100%;
	padding-right: 4px;
	font-size: 13px;
	text-align: right;
	${field}
`

const PushButton = styled.button`
	display: flex;
	align-items: center;
	justify-content: center;
	width: 100%;
	height: 100%;
	padding-top: 2px;
	border: 1px solid #d0d0d0;
	border-bottom-color: #bababa;
	border-radius: 4px;
	background: #fdfdfd;
`

const StyledCombo = styled.div`
	display: grid;
	align-items: center;
	height: 100%;

	& > * {
		grid-area: 1 / 1;
	}

	select {
		width: 100%;
		height: 100%;
		border: 1px solid #d0d0d0;
		border-bottom-color: #b4b4b4;
		border-radius: 2px;
		background: #fdfdfd;
		appearance: none;
	}

	svg {
		justify-self: end;
		margin: 2px 4px 0 0;
		pointer-events: none;
	}
`

const Handle = styled.i`
	position: absolute;
	left: ${({ $x }) => $x - 3}px;
	top: ${({ $y }) => $y - 3}px;
	width: 6px;
	height: 6px;
	border: 1px solid #0000f0;
	background: #000;
`

const StyledCheck = styled.label`
	display: flex;
	align-items: center;
	gap: 5px;

	span {
		padding-top: 4px;
	}

	input {
		flex: none;
		width: 13px;
		height: 13px;
		border: 1px solid #626262;
		border-radius: 3px;
		background: #f5f5f5;
		appearance: none;
	}

	input:checked {
		border-color: #005fb8;
		background: #005fb8;
	}

	input:checked::before {
		content: "";
		display: block;
		width: 7px;
		height: 4px;
		margin: 3px 2px;
		border: solid #fff;
		border-width: 0 0 1px 1px;
		transform: rotate(-45deg);
	}
`

const FormStatus = styled.footer`
	display: flex;
	align-items: flex-end;
	justify-content: flex-end;
	height: 27px;
	padding: 2px;
`

const ObjectTable = styled.table`
	flex: 1;
	align-self: flex-start;
	width: 100%;
	table-layout: fixed;
	border-collapse: separate;
	border-spacing: 0;

	.class {
		width: 249px;
	}

	th {
		height: 25px;
		padding: 0 4px;
		font-weight: 400;
		text-align: left;
	}

	th + th {
		border-left: 1px solid #e5e5e5;
		border-right: 1px solid #e5e5e5;
	}
`

const ObjectRow = styled.tr`
	td {
		height: 19px;
		padding: 0 0 0 80px;
		line-height: 19px;
	}

	td + td {
		padding-left: 4px;
		background: ${({ $selected, $odd }) => ($selected ? "#d9d9d9" : $odd ? "#f5f5f5" : "#fff")};
	}

	span {
		display: block;
		padding-left: 2px;
		background: ${({ $odd }) => ($odd ? "#f5f5f5" : "#fff")};
	}
`

const PropertyTools = styled.div`
	display: flex;
	flex: none;
	align-items: center;
	gap: 9px;
	margin: 7px 2px 5px 3px;

	input {
		flex: 1;
		margin-right: -4px;
	}
`

const IconButton = styled.button`
	position: relative;
	width: 22px;
	height: 24px;

	${({ $menu }) => $menu && css`
		&::after {
			content: "";
			position: absolute;
			right: -1px;
			bottom: 1px;
			border: 3px solid transparent;
			border-top-color: #000;
			border-bottom: 0 none;
		}
	`}
`

const SelectedName = styled.div`
	flex: none;
	height: 19px;
	margin-bottom: 1px;
	padding-left: 2px;
	border: 1px solid ${theme.soft};
	border-right: 0 none;
	font: 13px/19px ${theme.mono};
`

const PropertyTable = styled.table`
	flex: 1;
	align-self: flex-start;
	width: 100%;
	table-layout: fixed;
	border-collapse: separate;
	border-spacing: 0;

	.branch {
		width: 20px;
	}

	.name {
		width: 129px;
	}

	th {
		height: 25px;
		padding: 0 4px;
		font-weight: 400;
		text-align: left;
	}

	th + th {
		border-left: 1px solid #e5e5e5;
		border-right: 1px solid #e5e5e5;
	}

	td {
		height: 21px;
		padding: 0 3px;
		border-bottom: 1px solid #d4d4d4;
	}

	td:first-child {
		padding: 0 0 0 4px;
	}
`

const PropertyGroup = styled.tr`
	background: #a0a0a0;
	color: #fff;
	font-weight: 700;
`

const PropertyRow = styled.tr`
	background: ${({ $tone }) => tones[$tone][1]};

	td:first-child {
		background: ${({ $tone }) => tones[$tone][0]};
	}

	td:nth-child(2) {
		font-weight: ${({ $bold }) => ($bold ? 700 : 400)};
	}

	td:last-child {
		border-left: 1px solid #d4d4d4;
	}

	td {
		height: ${({ $tall }) => ($tall ? 22 : 21)}px;
	}

	div {
		display: flex;
		align-items: center;
		gap: 3px;
		height: 20px;
	}
`

const ResourceTools = styled.div`
	display: flex;
	flex: none;
	align-items: center;
	gap: 7px;
	margin: 6px 0 4px 5px;

	input {
		width: 229px;
		margin-left: auto;
	}
`

const ResourcePanes = styled.div`
	display: grid;
	grid-template-columns: 262px minmax(0, 1fr);
	gap: 5px;
	flex: 1;
	min-height: 0;
`

const Pane = styled.div`
	padding: 2px 24px;
	border: 1px solid ${theme.line};
	${({ $open }) => $open && "border-right: 0 none;"}
	background: #fff;
`

const Tabs = styled.div`
	display: flex;
	flex: none;
	align-items: flex-start;
	height: 22px;
	padding-left: 2px;
`

const Tab = styled.button`
	height: ${({ $active }) => ($active ? 22 : 20)}px;
	padding: 0 ${({ $active }) => ($active ? 12 : 10)}px;
	border: 1px solid #e5e5e5;
	border-top: 0 none;
	background: ${({ $active }) => ($active ? "#f9f9f9" : "#f2f2f2")};
	font-family: ${theme.mono};
	font-size: 15px;
	line-height: 18px;
`

const Watermark = styled.div`
	position: absolute;
	right: 3px;
	bottom: 10px;
	color: rgba(240, 240, 240, 0.8);
	font: 36px/46px "Noto Sans", sans-serif;
	text-shadow: 1px 1px 1px rgba(110, 110, 110, 0.8);
	pointer-events: none;
`

export default App
